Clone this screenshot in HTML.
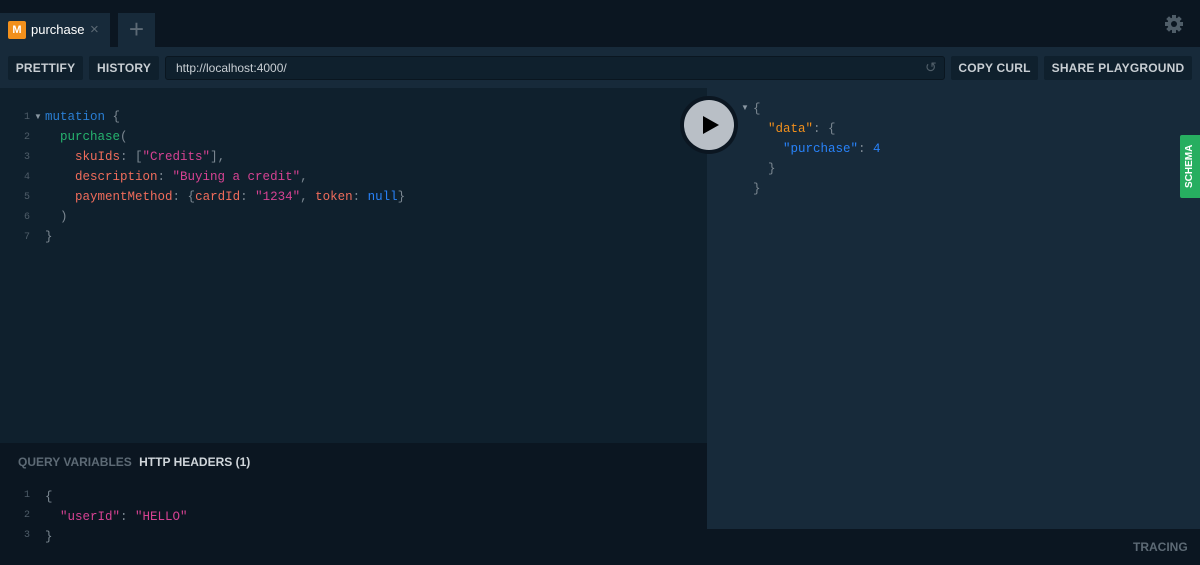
<!DOCTYPE html>
<html><head><meta charset="utf-8"><style>
*{margin:0;padding:0;box-sizing:border-box}
body{width:1200px;height:565px;overflow:hidden;background:#0b1621;font-family:"Liberation Sans",sans-serif;position:relative}
.abs{position:absolute}
.btn{position:absolute;top:56px;height:24px;background:#0f202d;color:#c8ced3;font-weight:bold;font-size:12px;letter-spacing:.2px;line-height:24px;text-align:center;border-radius:2px}
.code{font-family:"Liberation Mono",monospace;font-size:12.5px;line-height:20px;white-space:pre}
.ln{position:absolute;color:#4e5c68;font-size:10px;font-family:"Liberation Mono",monospace}
.k{color:#2a7ed3}.f{color:#26b36e}.a{color:#f06c5b}.s{color:#d64292}.p{color:#7b8791}.n{color:#2882f9}.o{color:#f2901c}
</style></head><body>
<div class="abs" style="left:0;top:13px;width:110px;height:35px;background:#172a3a"></div>
<div class="abs" style="left:8px;top:21px;width:18px;height:18px;background:#f2901c;border-radius:2px;color:#fff;font-weight:bold;font-size:11px;text-align:center;line-height:18px">M</div>
<div class="abs" style="left:31px;top:21px;color:#fff;font-size:13px;line-height:18px">purchase</div>
<div class="abs" style="left:90px;top:21px;color:#5d6a75;font-size:15px;line-height:18px">×</div>
<div class="abs" style="left:118px;top:13px;width:37px;height:35px;background:#172a3a;color:#5d6a75;font-size:26px;text-align:center;line-height:33px">+</div>
<svg class="abs" style="left:1164px;top:14px" width="20" height="20" viewBox="0 0 20 20"><g fill="#4f5d68"><circle cx="10" cy="10" r="6.5"/><rect x="8" y="1" width="4" height="18"/><rect x="1" y="8" width="18" height="4"/><rect x="8" y="1" width="4" height="18" transform="rotate(45 10 10)"/><rect x="8" y="1" width="4" height="18" transform="rotate(-45 10 10)"/></g><circle cx="10" cy="10" r="3" fill="#0b1621"/></svg>
<div class="abs" style="left:0;top:47px;width:1200px;height:41px;background:#172a3a"></div>
<div class="btn" style="left:8px;width:75px">PRETTIFY</div>
<div class="btn" style="left:89px;width:70px">HISTORY</div>
<div class="abs" style="left:165px;top:56px;width:780px;height:24px;background:#0f202d;border:1px solid #0a1620;border-radius:3px;color:#c8ced3;font-size:12px;line-height:22px;padding-left:10px">http://localhost:4000/</div>
<div class="abs" style="left:925px;top:59px;color:#4f5d68;font-size:14px">↺</div>
<div class="btn" style="left:951px;width:87px">COPY CURL</div>
<div class="btn" style="left:1044px;width:148px">SHARE PLAYGROUND</div>
<div class="abs" style="left:0;top:88px;width:707px;height:355px;background:#0f202d"></div>
<div class="abs" style="left:707px;top:88px;width:493px;height:441px;background:#172a3a"></div>
<div class="abs" style="left:1180px;top:135px;width:20px;height:63px;background:#27ae60;border-radius:2px 0 0 2px"></div>
<div class="abs" style="left:1180px;top:135px;width:20px;height:63px;color:#fff;font-weight:bold;font-size:10px;writing-mode:vertical-rl;transform:rotate(180deg);text-align:center;line-height:20px">SCHEMA</div>
<div class="ln" style="left:24px;top:108px;line-height:20px">1<br>2<br>3<br>4<br>5<br>6<br>7</div>
<div class="abs" style="left:34px;top:112px;color:#8a97a2;font-size:8px">▼</div>
<div class="code abs" style="left:45px;top:107px"><span class="k">mutation</span> <span class="p">{</span>
  <span class="f">purchase</span><span class="p">(</span>
    <span class="a">skuIds</span><span class="p">: [</span><span class="s">"Credits"</span><span class="p">],</span>
    <span class="a">description</span><span class="p">: </span><span class="s">"Buying a credit"</span><span class="p">,</span>
    <span class="a">paymentMethod</span><span class="p">: {</span><span class="a">cardId</span><span class="p">: </span><span class="s">"1234"</span><span class="p">, </span><span class="a">token</span><span class="p">: </span><span class="n">null</span><span class="p">}</span>
  <span class="p">)</span>
<span class="p">}</span></div>
<div class="abs" style="left:680px;top:96px;width:58px;height:58px;border-radius:50%;background:#0b1621"></div>
<div class="abs" style="left:684px;top:100px;width:50px;height:50px;border-radius:50%;background:#b9bfc6"></div>
<svg class="abs" style="left:701px;top:115px" width="20" height="20"><path d="M2 1L18 10L2 19Z" fill="#000"/></svg>
<div class="abs" style="left:741px;top:103px;color:#8a97a2;font-size:8px">▼</div>
<div class="code abs" style="left:753px;top:99px"><span class="p">{</span>
  <span class="o">"data"</span><span class="p">: {</span>
    <span class="n">"purchase"</span><span class="p">: </span><span class="n">4</span>
  <span class="p">}</span>
<span class="p">}</span></div>
<div class="abs" style="left:18px;top:455px;font-size:12px;font-weight:bold;color:#5d6a75">QUERY VARIABLES <span style="color:#d0d6db;margin-left:4px">HTTP HEADERS (1)</span></div>
<div class="ln" style="left:24px;top:486px;line-height:20px">1<br>2<br>3</div>
<div class="code abs" style="left:45px;top:487px"><span class="p">{</span>
  <span class="s">"userId"</span><span class="p">: </span><span class="s">"HELLO"</span>
<span class="p">}</span></div>
<div class="abs" style="left:1133px;top:540px;font-size:12px;font-weight:bold;color:#5d6a75">TRACING</div>
</body></html>
